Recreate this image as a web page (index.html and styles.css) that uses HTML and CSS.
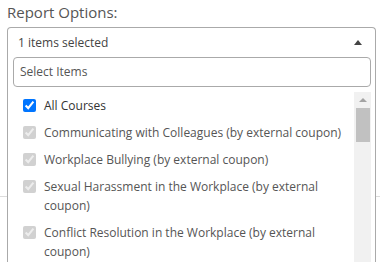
FILE: index.html
```html
<!DOCTYPE html>
<html>
<head>
<meta charset="utf-8">
<link rel="stylesheet" href="styles.css">
</head>
<body>
<div class="label">Report Options:</div>
<div class="select">
  <div class="trigger">
    <span class="summary">1 items selected</span>
    <span class="caret"></span>
  </div>
  <div class="search">Select Items</div>
  <div class="menu">
    <ul class="options">
      <li class="option main"><input type="checkbox" checked><span>All Courses</span></li>
      <li class="option"><input type="checkbox" checked disabled><span>Communicating with Colleagues (by external coupon)</span></li>
      <li class="option"><input type="checkbox" checked disabled><span>Workplace Bullying (by external coupon)</span></li>
      <li class="option"><input type="checkbox" checked disabled><span>Sexual Harassment in the Workplace (by external coupon)</span></li>
      <li class="option"><input type="checkbox" checked disabled><span>Conflict Resolution in the Workplace (by external coupon)</span></li>
    </ul>
    <div class="scrollbar">
      <div class="arrow"></div>
      <div class="thumb"></div>
    </div>
  </div>
</div>
</body>
</html>
```
FILE: styles.css
```css
html {
  background: #fff linear-gradient(#dcdcdc, #dcdcdc) 0 196px / 100% 1px no-repeat;
}
body {
  margin: 0;
  font-family: "Open Sans", "Liberation Sans", sans-serif;
  overflow: hidden;
  height: 262px;
}
.label {
  margin: 2px 0 0 7px;
  font-size: 15px;
  line-height: 20px;
  height: 25px;
  color: #555;
}
.select {
  margin-left: 7px;
  width: 367px;
  height: 240px;
  border: 1px solid #aaa;
  border-bottom: 0;
  border-radius: 4px 4px 0 0;
  background: #fff;
}
.trigger {
  display: flex;
  align-items: center;
  justify-content: space-between;
  height: 29px;
  padding: 0 13px 0 10px;
}
.summary {
  font-size: 12px;
  color: #444;
}
.caret {
  width: 0;
  height: 0;
  border-left: 4.5px solid transparent;
  border-right: 4.5px solid transparent;
  border-bottom: 5px solid #444;
}
.search {
  margin: 0 4px 0 5px;
  height: 28px;
  border: 1px solid #aaa;
  border-radius: 4px;
  padding-left: 6px;
  font-size: 12px;
  line-height: 28px;
  color: #555;
}
.menu {
  display: flex;
  margin-top: 5px;
  padding-right: 4px;
  height: 170px;
  overflow: hidden;
}
.options {
  flex: 1;
  list-style: none;
  margin: 0;
  padding: 0 0 0 15px;
}
.option {
  display: flex;
  align-items: flex-start;
  padding: 4px 0;
  font-size: 12px;
  line-height: 19px;
  color: #555;
}
.option.main {
  color: #333;
}
.option input {
  flex: none;
  width: 13px;
  height: 13px;
  margin: 3px 8px 0 0;
}
.scrollbar {
  flex: none;
  width: 17px;
  height: 175px;
  background: #f1f1f1;
  display: flex;
  flex-direction: column;
  align-items: center;
}
.arrow {
  margin-top: 6px;
  width: 0;
  height: 0;
  border-left: 4px solid transparent;
  border-right: 4px solid transparent;
  border-bottom: 4px solid #a3a3a3;
}
.thumb {
  margin-top: 6px;
  width: 14px;
  height: 34px;
  background: #c1c1c1;
}
```
